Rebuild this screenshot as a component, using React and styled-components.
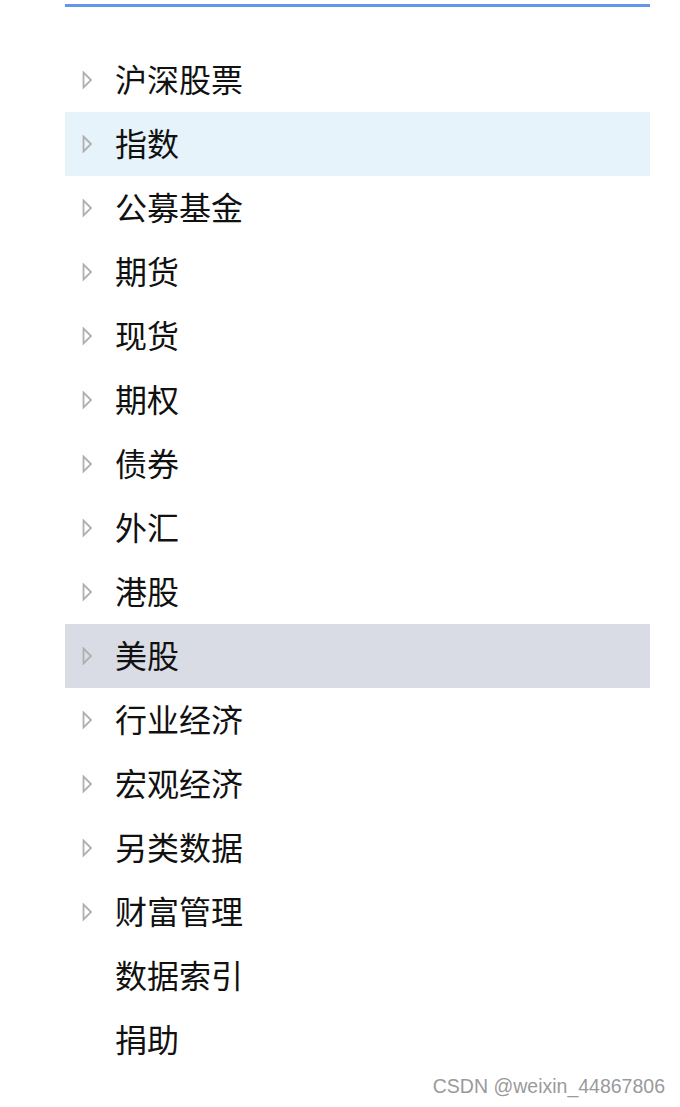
import React from 'react'
import styled, { createGlobalStyle } from 'styled-components'

const GlobalStyle = createGlobalStyle`
  html, body {
    margin: 0;
    padding: 0;
    background: #fff;
  }
  body {
    width: 680px;
    height: 1107px;
    overflow: hidden;
    font-family: "Noto Sans CJK SC", "Liberation Sans", sans-serif;
  }
`

const Page = styled.div`
  position: relative;
  height: 1107px;
  padding-top: 4px;
  box-sizing: border-box;
`

const Panel = styled.div`
  width: 585px;
  margin-left: 65px;
  border-top: 3px solid #6495ed;
  padding-top: 41px;
`

const Menu = styled.ul`
  list-style: none;
  margin: 0;
  padding: 0;
`

const Item = styled.li`
  height: 64px;
  display: flex;
  align-items: center;
  background: ${p => p.$bg || 'transparent'};
  color: #111;
  font-size: 32px;
  cursor: pointer;
`

const Arrow = styled.span`
  width: 50px;
  display: flex;
  justify-content: flex-start;
  padding-left: 17px;
  box-sizing: border-box;
  svg { display: block; }
`

const Label = styled.span`
  line-height: 1;
  padding-bottom: 4px;
`

const Watermark = styled.div`
  position: absolute;
  right: 15px;
  bottom: 9px;
  font-family: "Liberation Sans", sans-serif;
  font-size: 19.5px;
  color: #9a9a9a;
`

const items = [
  { name: '沪深股票', arrow: true },
  { name: '指数', arrow: true, bg: '#e6f3fa' },
  { name: '公募基金', arrow: true },
  { name: '期货', arrow: true },
  { name: '现货', arrow: true },
  { name: '期权', arrow: true },
  { name: '债券', arrow: true },
  { name: '外汇', arrow: true },
  { name: '港股', arrow: true },
  { name: '美股', arrow: true, bg: '#d9dce4' },
  { name: '行业经济', arrow: true },
  { name: '宏观经济', arrow: true },
  { name: '另类数据', arrow: true },
  { name: '财富管理', arrow: true },
  { name: '数据索引' },
  { name: '捐助' }
]

const TriangleIcon = () => (
  <svg width="11" height="18" viewBox="0 0 11 18">
    <path d="M1.5 1.5 L9 9 L1.5 16.5 Z" fill="none" stroke="#b0b0b0" strokeWidth="1.8" strokeLinejoin="miter" />
  </svg>
)

const App = () => (
  <Page>
    <GlobalStyle />
    <Panel>
      <Menu>
        {items.map(it => (
          <Item key={it.name} $bg={it.bg}>
            <Arrow>{it.arrow && <TriangleIcon />}</Arrow>
            <Label>{it.name}</Label>
          </Item>
        ))}
      </Menu>
    </Panel>
    <Watermark>CSDN @weixin_44867806</Watermark>
  </Page>
)

export default App
